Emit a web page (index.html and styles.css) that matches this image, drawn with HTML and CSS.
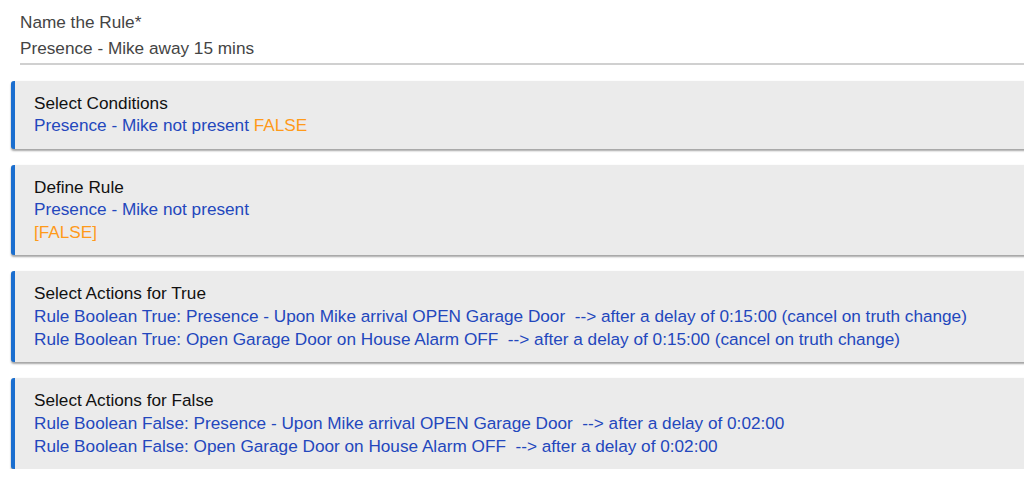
FILE: index.html
```html
<!DOCTYPE html>
<html>
<head>
<meta charset="utf-8">
<link rel="stylesheet" href="styles.css">
</head>
<body>
<div class="page">
  <div class="field">
    <div class="field-label">Name the Rule*</div>
    <div class="field-value">Presence - Mike away 15 mins</div>
  </div>
  <div class="card">
    <div class="card-title">Select Conditions</div>
    <div class="line">Presence - Mike not present <span class="orange">FALSE</span></div>
  </div>
  <div class="card">
    <div class="card-title">Define Rule</div>
    <div class="line">Presence - Mike not present</div>
    <div class="line orange">[FALSE]</div>
  </div>
  <div class="card">
    <div class="card-title">Select Actions for True</div>
    <div class="line">Rule Boolean True: Presence - Upon Mike arrival OPEN Garage Door&nbsp; --&gt; after a delay of 0:15:00 (cancel on truth change)</div>
    <div class="line">Rule Boolean True: Open Garage Door on House Alarm OFF&nbsp; --&gt; after a delay of 0:15:00 (cancel on truth change)</div>
  </div>
  <div class="card">
    <div class="card-title">Select Actions for False</div>
    <div class="line">Rule Boolean False: Presence - Upon Mike arrival OPEN Garage Door&nbsp; --&gt; after a delay of 0:02:00</div>
    <div class="line">Rule Boolean False: Open Garage Door on House Alarm OFF&nbsp; --&gt; after a delay of 0:02:00</div>
  </div>
</div>
</body>
</html>
```
FILE: styles.css
```css
html, body {
  margin: 0;
  padding: 0;
  background: #ffffff;
  overflow: hidden;
}
body {
  font-family: "Liberation Sans", Arial, sans-serif;
  font-size: 17.2px;
  line-height: 22.5px;
}
.page {
  width: 1044px;
  padding-top: 11px;
  display: flex;
  flex-direction: column;
  gap: 16px;
}
.field {
  margin-left: 20px;
  padding-bottom: 3px;
  border-bottom: 2px solid #d0d0d0;
  color: #444444;
  display: flex;
  flex-direction: column;
  gap: 3.5px;
}
.card {
  margin-left: 11px;
  background: #ebebeb;
  border-left: 4px solid #1a6ecf;
  border-radius: 3px;
  padding: 11px 0 11.5px 19px;
  line-height: 22.8px;
  box-shadow: 0 2px 2px rgba(0, 0, 0, 0.35), 0 0 1px rgba(0, 0, 0, 0.12);
}
.card-title {
  color: #111111;
}
.line {
  color: #2347bd;
  white-space: nowrap;
}
.orange {
  color: #ff9a1a;
}
```
